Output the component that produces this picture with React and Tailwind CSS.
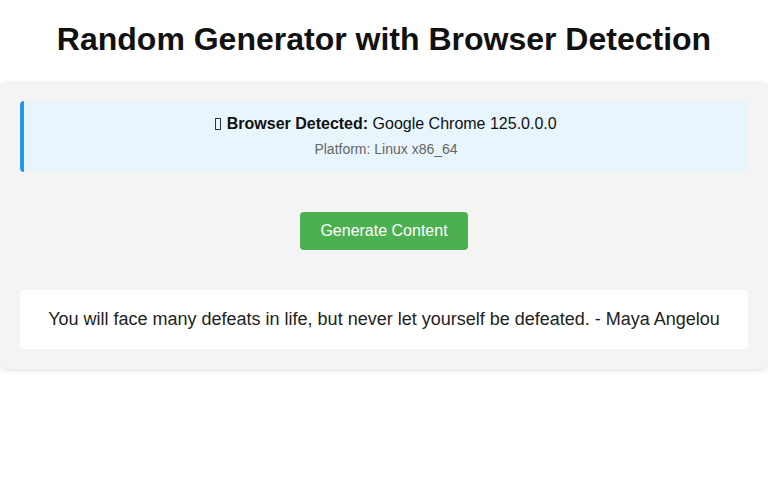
import React from "react";

const browser = { name: "Google Chrome", version: "125.0.0.0", platform: "Linux x86_64" };
const quote = "You will face many defeats in life, but never let yourself be defeated. - Maya Angelou";

// missing-glyph box, as the emoji shows up without an emoji font
function Tofu() {
  return <span className="mr-[1px] mb-[-1px] inline-block h-[12px] w-[6px] border border-[#333] align-baseline" />;
}

function BrowserInfo({ info }) {
  return (
    <div className="rounded-[4px] border-l-4 border-[#2196f3] bg-[#e8f5fd] px-[15px] pt-[14px] pb-[15px] text-center">
      <p className="text-[16px] leading-[18px] text-[#111]">
        <Tofu /> <strong className="font-bold">Browser Detected:</strong> {info.name} {info.version}
      </p>
      <p className="mt-[8px] text-[14px] leading-[16px] text-[#666]">Platform: {info.platform}</p>
    </div>
  );
}

export default function App() {
  return (
    <div className="min-h-[480px] bg-white font-['Liberation_Sans',Arial,sans-serif] text-[#222]">
      <h1 className="pt-[21px] pb-[23px] text-center text-[32px] leading-[37px] font-bold text-[#111]">
        Random Generator with Browser Detection
      </h1>
      <div className="rounded-[8px] bg-[#f4f4f4] p-5 shadow-[0_2px_5px_rgba(0,0,0,0.1)]">
        <BrowserInfo info={browser} />
        <div className="flex justify-center py-10">
          <button
            type="button"
            className="h-[38px] rounded-[4px] bg-[#4caf50] px-5 text-[16px] text-white"
          >
            Generate Content
          </button>
        </div>
        <div className="flex h-[59px] items-center justify-center rounded-[4px] bg-white px-5 text-center text-[18px] text-[#222]">
          {quote}
        </div>
      </div>
    </div>
  );
}
